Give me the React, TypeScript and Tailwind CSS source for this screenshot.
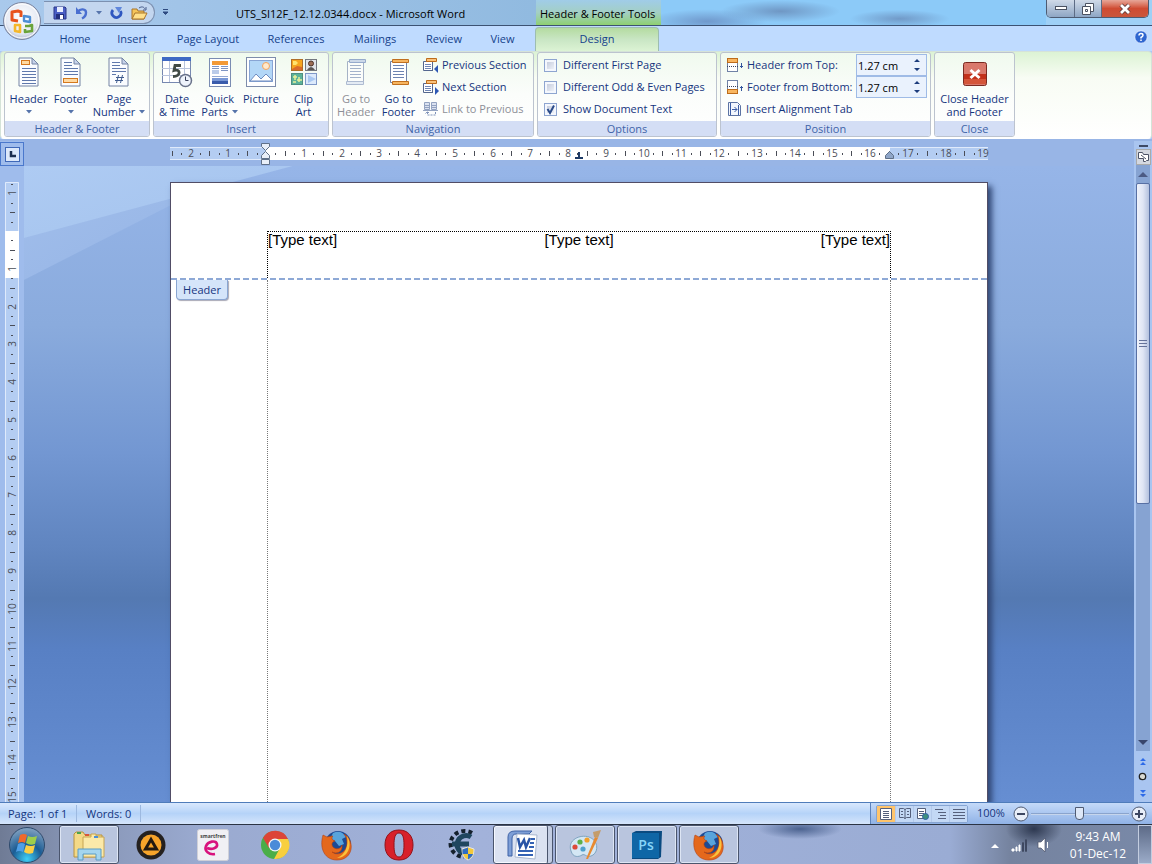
import type { ReactNode } from "react";

const CM = 37.75;

/* ---------- small icons ---------- */

const SaveIcon = () => (
  <svg width="14" height="14" viewBox="0 0 14 14">
    <path d="M1 1h11l1 1v11H1z" fill="#4a5fc4" stroke="#2b3789" />
    <rect x="4" y="1" width="6" height="5" fill="#e6ecff" />
    <rect x="3" y="8" width="8" height="5" fill="#23307c" />
    <rect x="7" y="9" width="3" height="4" fill="#fff" />
  </svg>
);

const UndoIcon = () => (
  <svg width="13" height="14" viewBox="0 0 13 14" fill="none">
    <path d="M3 5.500c2-3 8-3 8 1 0 3-2 5-4 6" stroke="#4a6fd0" strokeWidth="2.400" />
    <path d="M1 1v7h6z" fill="#4a6fd0" />
  </svg>
);

const RedoIcon = () => (
  <svg width="13" height="14" viewBox="0 0 13 14" fill="none">
    <path d="M3 4a4.500 4.500 0 1 0 7.500 1" stroke="#2f57c0" strokeWidth="2.800" />
    <path d="M5 1h7l-3 6z" fill="#5f86dc" />
  </svg>
);

const FolderIcon = () => (
  <svg width="17" height="14" viewBox="0 0 17 14">
    <path d="M1 13V3h5l1 2h6v8z" fill="#f5c55a" stroke="#a8742a" />
    <path d="M1 13l3-6h12l-3 6z" fill="#ffe08a" stroke="#a8742a" />
    <path d="M8 2c3-2 5-1 6 1M15 1v3h-3" fill="none" stroke="#4b5f8c" />
  </svg>
);

const OfficeOrb = () => (
  <svg width="42" height="42" viewBox="0 0 42 42">
    <defs>
      <radialGradient id="orb" cx="50%" cy="40%" r="62%">
        <stop offset="0" stopColor="#fff" />
        <stop offset="0.7" stopColor="#e6eaf4" />
        <stop offset="1" stopColor="#a9b3cc" />
      </radialGradient>
    </defs>
    <circle cx="21" cy="21" r="18.500" fill="url(#orb)" stroke="#7c86a0" />
    <circle cx="21" cy="21" r="17" fill="none" stroke="#fff" />
    <g fill="none" strokeLinejoin="round">
      <path d="M20 17v-5l-3-1-6 1v8l6 1" stroke="#e8521c" strokeWidth="3" />
      <path d="M23 21v-5l6 1v5z" stroke="#4d8ed6" strokeWidth="2.400" />
      <path d="M19 25h-5v6l5 1z" stroke="#f5b72b" strokeWidth="2.600" />
      <path d="M24 26h4l3-1v6l-7 1v-3" stroke="#6aa33a" strokeWidth="2.600" />
    </g>
  </svg>
);

const DocIcon = ({ kind }: { kind: "header" | "footer" | "number" }) => (
  <svg width="24" height="32" viewBox="0 0 24 32">
    <path d="M2 2h13l6 6v22H2z" fill="#fafcff" stroke="#7484a4" />
    <path d="M15 2v6h6z" fill="#c7d3ea" stroke="#7484a4" />
    <path
      d={
        kind === "number"
          ? "M5 6.500h8M5 9.500h8M5 12.500h14M5 15.500h14M5 18.500h4"
          : kind === "footer"
            ? "M5 6.500h8M5 9.500h8M5 12.500h14M5 15.500h14M5 18.500h14"
            : "M5 12.500h14M5 15.500h14M5 18.500h14M5 21.500h14M5 24.500h14M5 27.500h14"
      }
      stroke="#5f78ac"
    />
    {kind === "header" && <rect x="4.500" y="4.500" width="8" height="4" fill="#ffd9a0" stroke="#d4781d" />}
    {kind === "footer" && <rect x="4.500" y="22.500" width="14" height="4" fill="#ffd9a0" stroke="#d4781d" />}
    {kind === "number" && <path d="M11.500 19l-2 8M15.500 19l-2 8M9 21.500h8M8 24.500h8" stroke="#405c8f" />}
  </svg>
);

const DateIcon = () => (
  <svg width="32" height="32" viewBox="0 0 32 32">
    <rect x="1.500" y="1.500" width="28" height="25" fill="#fff" stroke="#7788b0" />
    <rect x="1" y="1" width="29" height="4" fill="#3e69c4" />
    <path d="M1 12.500h28M1 19.500h28M8.500 5v21M23.500 5v21" stroke="#b8c4dc" />
    <path d="M20 9.500h-6l-1 5c7-2 7 6-1 6" fill="none" stroke="#414a45" strokeWidth="2.800" />
    <circle cx="24.500" cy="24.500" r="6" fill="#eef3fb" stroke="#69728a" strokeWidth="1.500" />
    <path d="M24.500 20.500v4h3" fill="none" stroke="#39415a" />
  </svg>
);

const QuickPartsIcon = () => (
  <svg width="24" height="32" viewBox="0 0 24 32">
    <rect x="1.500" y="2.500" width="21" height="28" fill="#fff" stroke="#7a8cb2" />
    <rect x="4" y="5" width="16" height="4" fill="#f39a35" />
    <path d="M4 10.500h7M4 12.500h7M13 10.500h7M13 12.500h7M13 14.500h7" stroke="#7f96c4" />
    <rect x="4" y="14" width="7" height="4" fill="#bacbe9" />
    <path d="M4 20.500h16" stroke="#96abd4" />
    <rect x="4" y="22" width="16" height="3" fill="#7998d6" />
    <rect x="4" y="25" width="16" height="3" fill="#3a5cab" />
  </svg>
);

const PictureIcon = () => (
  <svg width="32" height="32" viewBox="0 0 32 32">
    <rect x="1.500" y="1.500" width="29" height="29" fill="#fff" stroke="#7d8cab" />
    <rect x="4.500" y="4.500" width="23" height="21" fill="#b3d7f7" stroke="#88a5d4" />
    <circle cx="21" cy="10" r="3.500" fill="#ffe9cc" stroke="#f2a45e" />
    <path d="M5 25l6-7 5 5 5-5 6 6v1z" fill="#fff" stroke="#6f8dc0" />
  </svg>
);

const ClipArtIcon = () => (
  <svg width="28" height="32" viewBox="0 0 28 32">
    <rect x="1.500" y="3.500" width="11" height="11" fill="#f6a51f" stroke="#b06f28" />
    <path d="M2 13l5-3 5 1v3H2z" fill="#d96a2c" />
    <path d="M3 5h3l2 2-2 2H3z" fill="#ffe36e" />
    <rect x="15.500" y="3.500" width="11" height="11" fill="#e1e4ea" stroke="#74787f" />
    <circle cx="21" cy="7.500" r="2.500" fill="#9c6d55" stroke="#4d3328" />
    <path d="M17 14q4-6 8 0z" fill="#5b5654" />
    <rect x="1.500" y="17.500" width="11" height="11" fill="#5cb29a" stroke="#4f8f80" />
    <path d="M5 19v5M3 21h4M9 21v5M7 24h5M3 26h3" stroke="#e8f19a" fill="none" strokeWidth="1.500" />
    <rect x="15.500" y="17.500" width="11" height="11" fill="#dceafc" stroke="#7f98c8" />
    <path d="M18 19l8 4-8 4z" fill="#a9c8f2" />
  </svg>
);

const GoToIcon = ({ footer }: { footer?: boolean }) => (
  <svg width="26" height="30" viewBox="0 0 26 30" opacity={footer ? 1 : 0.6}>
    <path d="M4.500 4.500h16v21h-16z" fill="#fff" stroke="#7183a9" />
    <path d="M7 8.500h11M7 11.500h11M7 14.500h11M7 17.500h11M7 20.500h11" stroke="#6d83b0" />
    <path d="M6.500 2.500h16v3h-16z" fill={footer ? "#f6b560" : "#b4c4e4"} stroke={footer ? "#c06f1e" : "#5a77b4"} />
    <path
      d={footer ? "M6.500 24.500h16v3h-16z" : "M3.500 24.500h17v3h-17z"}
      fill={footer ? "#f6b560" : "#d7e0f2"}
      stroke={footer ? "#c06f1e" : "#7d90b8"}
    />
  </svg>
);

const SectionIcon = ({ next }: { next?: boolean }) => (
  <svg width="16" height="16" viewBox="0 0 16 16">
    <path d="M0.500 4.500h9v9h-9z" fill="#fff" stroke="#54678f" />
    <path d="M2 7.500h6M2 9.500h6M2 11.500h6" stroke="#6f86b5" />
    <path d="M3.500 1.500h10v3h-10z" fill="#f9c27b" stroke="#bd6c1b" />
    <path d="M9.500 5v9" stroke="#54678f" />
    <path d={next ? "M12 8l4 4-4 4z" : "M15 8l-4 4 4 4z"} fill="#2d57b4" />
  </svg>
);

const LinkPrevIcon = () => (
  <svg width="16" height="16" viewBox="0 0 16 16" opacity="0.800">
    <path d="M1.500 1.500h5v7h-5zM8.500 1.500h5v7h-5z" fill="#d3dcee" stroke="#7a8db3" />
    <path d="M2 4.500h4M9 4.500h4M2 6.500h4M9 6.500h4M0 9.500h15" stroke="#7a8db3" />
    <path d="M4.500 11v3h8v-3M2.500 12.500l2-2 2 2" fill="none" stroke="#6078a8" strokeDasharray="2 1" />
  </svg>
);

const FromEdgeIcon = ({ bottom }: { bottom?: boolean }) => (
  <svg width="17" height="16" viewBox="0 0 17 16">
    <rect x="0.500" y="1.500" width="10" height="13" fill="#fff" stroke="#7082a6" />
    <rect x="0.500" y={bottom ? 10.5 : 1.5} width="10" height="4" fill="#f9b660" stroke="#bd6c1b" />
    <path d={bottom ? "M0 7.500h11" : "M0 9.500h11"} stroke="#39435c" strokeDasharray="1 1" />
    <path
      d={bottom ? "M14.500 12V7M13 9l1.500-1.500L16 9" : "M14.500 6v5M13 9l1.500 1.500L16 9"}
      stroke="#31549c"
      fill="none"
    />
  </svg>
);

const AlignTabIcon = () => (
  <svg width="16" height="16" viewBox="0 0 16 16">
    <path d="M1.500 1.500h9l3 3v10h-12z" fill="#f2f6fd" stroke="#5c73a3" />
    <path d="M3.500 2v12M11.500 4v10M5 8.500h5M7.500 6L10 8.500 7.500 11" stroke="#3c5ca4" fill="none" />
  </svg>
);

/* ---------- ribbon parts ---------- */

const Caret = () => (
  <svg width="6" height="4" viewBox="0 0 6 4" className="inline-block">
    <path d="M0 0h6L3 3.500z" fill="#5674ab" />
  </svg>
);

type GroupProps = { title: string; width: string; children: ReactNode };

const Group = ({ title, width, children }: GroupProps) => (
  <section
    className={`flex h-[85px] shrink-0 flex-col overflow-hidden rounded-[3px] border border-[#bcc3cf] bg-linear-to-b from-[#f0faee] via-[#fbfdfb] to-white ${width}`}
  >
    <div className="flex flex-1">{children}</div>
    <h2 className="h-[15px] bg-[#d4def5] text-center leading-[15px] text-[#3f64a8]">{title}</h2>
  </section>
);

type BigButtonProps = {
  icon: ReactNode;
  lines: string[];
  width: string;
  caret?: boolean;
  disabled?: boolean;
};

const BigButton = ({ icon, lines, width, caret, disabled }: BigButtonProps) => (
  <button
    disabled={disabled}
    className={`flex flex-col items-center pt-[3px] leading-[13px] ${disabled ? "text-[#8d8f97]" : "text-[#15357e]"} ${width}`}
  >
    <span className="mb-1 flex h-[32px] items-center">{icon}</span>
    {lines.map((line, i) => (
      <span key={line} className="flex items-center gap-1 whitespace-nowrap">
        {line}
        {caret && lines.length > 1 && i === lines.length - 1 && <Caret />}
      </span>
    ))}
    {caret && lines.length === 1 && (
      <span className="flex h-[13px] items-center">
        <Caret />
      </span>
    )}
  </button>
);

const RowButton = ({ icon, label, disabled }: { icon: ReactNode; label: string; disabled?: boolean }) => (
  <button
    disabled={disabled}
    className={`flex h-[22px] items-center gap-[3px] whitespace-nowrap ${disabled ? "text-[#8d8f97]" : "text-[#15357e]"}`}
  >
    {icon}
    {label}
  </button>
);

const Check = ({ label, checked }: { label: string; checked?: boolean }) => (
  <label className="flex h-[22px] items-center gap-[6px] whitespace-nowrap text-[#15357e]">
    <span className="grid shrink-0 place-items-center">
      <input
        type="checkbox"
        defaultChecked={checked}
        className="peer col-start-1 row-start-1 size-[13px] appearance-none border border-[#8ea5d0] bg-linear-to-br from-[#bcc4d6] to-[#f8faff] shadow-[inset_0_0_0_2px_#f4f7fd]"
      />
      <svg width="13" height="13" viewBox="0 0 13 13" className="pointer-events-none invisible col-start-1 row-start-1 peer-checked:visible">
        <path d="M3.500 6l2.500 4 4-7.500" fill="none" stroke="#2b4c8a" strokeWidth="2" />
      </svg>
    </span>
    {label}
  </label>
);

const Spin = ({ id, icon, label }: { id: string; icon: ReactNode; label: string }) => (
  <div className="flex h-[22px] items-center whitespace-nowrap text-[#15357e]">
    <span className="w-[20px]">{icon}</span>
    <label htmlFor={id} className="w-[109px]">
      {label}
    </label>
    <span className="flex h-[22px] w-[71px] items-center border border-[#9fbbe6] bg-[#eaf2fd]">
      <input id={id} defaultValue="1.27 cm" className="h-full w-[56px] bg-transparent px-px text-black outline-none" />
      <svg width="8" height="14" viewBox="0 0 8 14">
        <path d="M1 4l3-3 3 3zM1 10l3 3 3-3z" fill="#1c3c7c" />
      </svg>
    </span>
  </div>
);

const Ribbon = () => (
  <div className="flex h-[88px] gap-[3px] rounded-[4px] border border-[#d5e3d8] border-b-white bg-linear-to-b from-[#dcf3d4] via-[#f8fcf4] via-30% to-white pl-[3px]">
    <Group title="Header & Footer" width="w-[146px]">
      <BigButton icon={<DocIcon kind="header" />} lines={["Header"]} caret width="w-[47px]" />
      <BigButton icon={<DocIcon kind="footer" />} lines={["Footer"]} caret width="w-[37px]" />
      <BigButton icon={<DocIcon kind="number" />} lines={["Page", "Number"]} caret width="w-[60px]" />
    </Group>
    <Group title="Insert" width="w-[176px]">
      <BigButton icon={<DateIcon />} lines={["Date", "& Time"]} width="w-[46px]" />
      <BigButton icon={<QuickPartsIcon />} lines={["Quick", "Parts"]} caret width="w-[39px]" />
      <BigButton icon={<PictureIcon />} lines={["Picture"]} width="w-[44px]" />
      <BigButton icon={<ClipArtIcon />} lines={["Clip", "Art"]} width="w-[41px]" />
    </Group>
    <Group title="Navigation" width="w-[202px]">
      <BigButton icon={<GoToIcon />} lines={["Go to", "Header"]} disabled width="w-[46px]" />
      <BigButton icon={<GoToIcon footer />} lines={["Go to", "Footer"]} width="w-[39px]" />
      <div className="flex flex-col pt-px pl-[5px]">
        <RowButton icon={<SectionIcon />} label="Previous Section" />
        <RowButton icon={<SectionIcon next />} label="Next Section" />
        <RowButton icon={<LinkPrevIcon />} label="Link to Previous" disabled />
      </div>
    </Group>
    <Group title="Options" width="w-[180px]">
      <div className="flex flex-col pt-px pl-[6px]">
        <Check label="Different First Page" />
        <Check label="Different Odd & Even Pages" />
        <Check label="Show Document Text" checked />
      </div>
    </Group>
    <Group title="Position" width="w-[211px]">
      <div className="flex flex-col pt-px pl-[6px]">
        <Spin id="from-top" icon={<FromEdgeIcon />} label="Header from Top:" />
        <Spin id="from-bottom" icon={<FromEdgeIcon bottom />} label="Footer from Bottom:" />
        <RowButton icon={<AlignTabIcon />} label="Insert Alignment Tab" />
      </div>
    </Group>
    <Group title="Close" width="w-[81px]">
      <BigButton
        icon={
          <svg width="24" height="28" viewBox="0 -4 24 28">
            <rect x="0.500" y="0.500" width="23" height="23" rx="2" fill="#d9796c" stroke="#7b2a22" />
            <path d="M1 12h22v5H1z" fill="#c2301a" />
            <path d="M1 17h22v5H1z" fill="#d4553a" />
            <path d="M7.500 8l9 8M16.500 8l-9 8" stroke="#fff" strokeWidth="3" />
          </svg>
        }
        lines={["Close Header", "and Footer"]}
        width="w-full"
      />
    </Group>
  </div>
);

/* ---------- title bar and tabs ---------- */

const tabs = [
  { name: "Home", width: "w-[58px]" },
  { name: "Insert", width: "w-[56px]" },
  { name: "Page Layout", width: "w-[96px]" },
  { name: "References", width: "w-[80px]" },
  { name: "Mailings", width: "w-[78px]" },
  { name: "Review", width: "w-[60px]" },
  { name: "View", width: "w-[57px]" },
];

const TitleBar = () => (
  <header className="flex h-[26px] border-b border-[#3c5273] bg-linear-to-r from-[#a9c9ec] via-[#8fb9df] to-[#9fd4f8] pl-[44px]">
    <nav className="flex h-[23px] w-[111px] items-center gap-[8px] self-center rounded-r-full border border-l-0 border-[#7c90b0] bg-[#c3d6ef] pl-[9px]">
      <button aria-label="Save"><SaveIcon /></button>
      <button aria-label="Undo"><UndoIcon /></button>
      <Caret />
      <button aria-label="Redo"><RedoIcon /></button>
      <button aria-label="Open"><FolderIcon /></button>
    </nav>
    <button aria-label="Customize" className="ml-[7px] w-[8px]">
      <svg width="7" height="7" viewBox="0 0 7 7">
        <path d="M1 0.500h5M1 3h5L3.500 5.500z" stroke="#2e4a80" fill="#2e4a80" />
      </svg>
    </button>
    <h1 className="ml-[66px] w-[300px] leading-[27px] whitespace-nowrap text-black">
      UTS_SI12F_12.12.0344.docx - Microsoft Word
    </h1>
    <p className="w-[125px] bg-linear-to-b from-[#a0cce8] via-[#a3cfc4] to-[#8fd070] pl-[4px] leading-[27px] whitespace-nowrap text-black">
      Header &amp; Footer Tools
    </p>
    <div className="min-w-0 flex-1 bg-[radial-gradient(60px_11px_at_31%_45%,#6f97c4,transparent),radial-gradient(50px_9px_at_62%_75%,#719ac8,transparent),radial-gradient(60px_12px_at_12%_85%,#7099cc,transparent)] bg-[#8ccaf8]" />
    <div className="flex shrink-0 bg-[#9fd0f6] pr-[3px]">
      <div className="flex h-[18px] w-[103px] overflow-hidden rounded-b-[5px] border border-t-0 border-[#4d5b72]">
        <button aria-label="Minimize" className="flex w-[28px] items-center justify-center border-r border-[#5d6c85] bg-linear-to-b from-[#d0dae8] to-[#8ea6c4]">
          <svg width="12" height="5"><rect x="0.500" y="0.500" width="11" height="3" fill="#fff" stroke="#4b5261" /></svg>
        </button>
        <button aria-label="Restore" className="flex w-[27px] items-center justify-center border-r border-[#5d6c85] bg-linear-to-b from-[#d0dae8] to-[#8ea6c4]">
          <svg width="12" height="12" viewBox="0 0 12 12" fill="#fff" stroke="#4b5261">
            <path d="M3.500 0.500h8v8h-8z" />
            <path d="M0.500 3.500h8v8h-8zM3.500 6.500h2v2h-2z" />
          </svg>
        </button>
        <button aria-label="Close" className="flex flex-1 items-center justify-center bg-linear-to-b from-[#e6a698] via-[#cf4b32] to-[#c9563c]">
          <svg width="14" height="12" viewBox="0 0 14 12">
            <path d="M3 2l8 8M11 2l-8 8" stroke="#5b3a3a" strokeWidth="4.500" />
            <path d="M3 2l8 8M11 2l-8 8" stroke="#fff" strokeWidth="2.800" />
          </svg>
        </button>
      </div>
    </div>
  </header>
);

const TabRow = () => (
  <nav className="flex h-[25px] items-end bg-[#bfdbff] pl-[46px] text-[#15428b]">
    {tabs.map((tab) => (
      <button key={tab.name} className={`h-[24px] whitespace-nowrap ${tab.width}`}>
        {tab.name}
      </button>
    ))}
    <button className="ml-[4px] h-[24px] w-[124px] rounded-t-[4px] border border-b-0 border-[#9dbdb0] bg-linear-to-b from-[#b4dba0] via-[#c9e6c4] to-[#dcf3d4]">
      Design
    </button>
    <button aria-label="Help" className="mr-[4px] mb-[7px] ml-auto">
      <svg width="14" height="14" viewBox="0 0 14 14">
        <circle cx="7" cy="7" r="6.300" fill="#2f66d0" stroke="#dfeaff" />
        <path d="M5 5.500q0-2 2-2t2 1.700q0 1-2 2.300v1M7 9.500v1.500" fill="none" stroke="#fff" strokeWidth="1.500" />
      </svg>
    </button>
  </nav>
);

/* ---------- rulers ---------- */

type RulerProps = { length: number; zero: number; whiteEnd: number };

const quarterMarks = (length: number, zero: number) => {
  const marks: { q: number; at: number }[] = [];
  for (let q = Math.ceil((-zero / CM) * 4); (q * CM) / 4 + zero < length; q++) {
    if (q !== 0) marks.push({ q, at: Math.round(zero + (q * CM) / 4) });
  }
  return marks;
};

const HorizontalRuler = ({ length, zero, whiteEnd }: RulerProps) => (
  <svg width={length} height="22" viewBox={`0 -6 ${length} 22`} className="shrink-0 overflow-visible">
    <rect width={length} height="13" fill="#b4cdf2" />
    <path d={`M0 0.500h${length}M0 12.500h${length}`} stroke="#dfeafb" />
    <rect x={zero} width={whiteEnd - zero} height="13" fill="#fff" />
    {quarterMarks(length, zero).map(({ q, at }) =>
      q % 4 === 0 ? (
        <text key={q} x={at} y="10" textAnchor="middle" fontSize="10" fill="#4a4d57">
          {Math.abs(q / 4)}
        </text>
      ) : q % 2 === 0 ? (
        <rect key={q} x={at} y="4" width="1" height="5" fill="#4a4d57" />
      ) : (
        <rect key={q} x={at} y="6" width="1" height="2" fill="#4a4d57" />
      ),
    )}
    <g fill="#e9eff8" stroke="#5f7088">
      <path d={`M${zero - 4.5}-3.500h8v3l-4 4-4-4z`} />
      <path d={`M${zero - 4.5} 11.500v-3l4-4 4 4v3z`} />
      <path d={`M${zero - 4.5} 12.500h8v5h-8z`} />
      <path d={`M${whiteEnd - 4.5} 11.500v-3l4-4 4 4v3z`} fill="#8fa6c8" />
    </g>
    <path d="M405 11h8M409 5v6" stroke="#1d3a66" strokeWidth="2" />
  </svg>
);

const VerticalRuler = ({ length, zero, whiteEnd }: RulerProps) => (
  <svg width="14" height={length} viewBox={`0 0 14 ${length}`}>
    <rect width="14" height={length} fill="#b4cdf2" />
    <path d={`M0.500 ${length}V0.500h13V${length}`} fill="none" stroke="#dfeafb" />
    <rect y={zero} width="14" height={whiteEnd - zero} fill="#fff" />
    {quarterMarks(length, zero).map(({ q, at }) =>
      q % 4 === 0 ? (
        <text key={q} transform={`translate(11 ${at}) rotate(-90)`} textAnchor="middle" fontSize="10" fill="#4a4d57">
          {Math.abs(q / 4)}
        </text>
      ) : q % 2 === 0 ? (
        <rect key={q} x="5" y={at} width="5" height="1" fill="#4a4d57" />
      ) : (
        <rect key={q} x="6" y={at} width="2" height="1" fill="#4a4d57" />
      ),
    )}
  </svg>
);

/* ---------- document ---------- */

const ScrollColumn = () => (
  <aside className="flex w-[18px] shrink-0 flex-col items-center bg-[#a9c5f0]">
    <div className="mt-[4px] h-[2px] w-[9px] shrink-0 bg-[#3e4a66]" />
    <button aria-label="View ruler" className="mt-[2px] flex h-[16px] w-[15px] shrink-0 items-center justify-center border border-[#aaa] bg-[#d4d8e0]">
      <svg width="13" height="12" viewBox="0 0 13 12" fill="#fff" stroke="#4d5366">
        <path d="M1.500 1.500h4l1 2h5v6h-2l-1 1h-2v-3h-5zM4 4l5 4" />
      </svg>
    </button>
    <div className="flex w-[14px] flex-1 flex-col items-center bg-[#86a3d2]">
      <svg width="10" height="18" viewBox="0 0 10 18"><path d="M0 12l5-5 5 5z" fill="#4c5b84" /></svg>
      <div className="flex h-[321px] w-[14px] items-center justify-center rounded-[2px] border border-[#5870a4] bg-linear-to-r from-[#f0f3fb] via-[#dfe5f4] to-[#b4c1de]">
        <svg width="8" height="8"><path d="M0 0.500h8M0 3.500h8M0 6.500h8" stroke="#65739a" /></svg>
      </div>
      <svg width="10" height="18" viewBox="0 0 10 18" className="mt-auto"><path d="M0 7l5 5 5-5z" fill="#38466c" /></svg>
    </div>
    <svg width="14" height="51" viewBox="0 0 14 51">
      <path d="M4 10l3-3 3 3zM4 14l3-3 3 3zM4 39l3 3 3-3zM4 43l3 3 3-3z" fill="#2d6ae8" />
      <circle cx="6.500" cy="25.500" r="3.200" fill="#d9d9d2" stroke="#222" strokeWidth="1.300" />
    </svg>
  </aside>
);

const Page = () => (
  <article className="mx-auto mt-[16px] flex w-[818px] shrink-0 flex-col border border-b-0 border-[#514d66] bg-white shadow-[4px_4px_6px_#2f4674]">
    <div className="mx-[96px] mt-[48px] flex h-[47px] justify-between border border-b-0 border-dotted border-black font-['Liberation_Sans',Arial,sans-serif] text-[15px] leading-[16px] text-black">
      <span>[Type text]</span>
      <span>[Type text]</span>
      <span>[Type text]</span>
    </div>
    <div className="h-[2px] bg-[repeating-linear-gradient(90deg,#8ea9d6_0_6px,transparent_6px_9px)]" />
    <div className="relative mx-[96px] flex-1 border-x border-dotted border-[#777]">
      <div className="absolute top-0 -left-[92px] h-[20px] w-[52px] rounded-b-[4px] border border-t-0 border-[#8aa6d2] bg-[#d5e5fa] text-center leading-[20px] text-[#15357e] shadow-[1px_1px_1px_#a9a9b6]">
        Header
      </div>
    </div>
  </article>
);

const Workspace = () => (
  <main className="flex min-h-0 flex-1 bg-[#98b5e6] pt-[2px]">
    <div className="flex w-[24px] shrink-0 flex-col overflow-hidden bg-[#9fbcec]">
      <button aria-label="Tab stop" className="mt-px flex h-[24px] w-[24px] shrink-0 items-center justify-center border border-[#4a78cc]">
        <span className="flex size-[15px] items-center justify-center border border-[#3f68b8] bg-[#dce8fa]">
          <svg width="7" height="7"><path d="M2 0v5h5" fill="none" stroke="#1c2f50" strokeWidth="2.500" /></svg>
        </span>
      </button>
      <div className="mt-[16px] ml-[5px]">
        <VerticalRuler length={620} zero={49} whiteEnd={96} />
      </div>
    </div>
    <div className="flex min-w-0 flex-1 flex-col overflow-hidden">
      <div className="flex h-[25px] shrink-0 justify-center">
        <HorizontalRuler length={818} zero={96} whiteEnd={720} />
      </div>
      <div className="flex min-h-0 flex-1 bg-[linear-gradient(165deg,#aecbf3_0,#a9c7f0_69px,transparent_70px),linear-gradient(153deg,#a2bfec_0,#9bb9e8_101px,transparent_102px),linear-gradient(180deg,#96b5e8_0%,#8aabdd_25%,#7397d2_45%,#6085c0_60%,#5479b2_68%,#5880c4_76%,#668ed2_100%)] bg-no-repeat">
        <Page />
      </div>
    </div>
    <ScrollColumn />
  </main>
);

/* ---------- status bar ---------- */

const views = [
  { name: "Print Layout", d: "M1.500 1.500h11v11h-11zM4 4.500h6M4 6.500h6M4 8.500h6M4 10.500h6" },
  { name: "Full Screen Reading", d: "M7 2v10M1.500 1.500h4l1.500 1 1.500-1h4v9h-4l-1.500 1-1.500-1h-4zM3 4.500h2M3 7.500h2M9 4.500h2M9 7.500h2" },
  { name: "Web Layout", d: "M1.500 1.500h8v10h-8zM3 4.500h5M3 6.500h5M3 8.500h4" },
  { name: "Outline", d: "M1 2.500h8M4 5.500h8M6 8.500h6M4 11.500h8" },
  { name: "Draft", d: "M1 2.500h12M1 5.500h12M1 8.500h12M1 11.500h12" },
];

const StatusBar = () => (
  <footer className="flex h-[22px] shrink-0 items-center border-t border-[#4f7cba] bg-linear-to-b from-[#d9e8fd] via-[#b5d3f8] to-[#d5e5fb] text-[#15357e]">
    <span className="w-[77px] border-r border-[#9db9e0] pl-[8px] leading-[17px] whitespace-nowrap">Page: 1 of 1</span>
    <span className="w-[64px] border-r border-[#9db9e0] pl-[9px] leading-[17px] whitespace-nowrap">Words: 0</span>
    <div className="ml-auto flex h-full items-center border-l border-[#5d83bd] bg-linear-to-b from-[#c4daf9] to-[#90b2e6] pl-[5px]">
      <div className="flex h-[18px] rounded-[2px] border border-[#86a4d2]">
        {views.map((view, i) => (
          <button
            key={view.name}
            aria-label={view.name}
            className={`flex w-[18px] items-center justify-center ${i === 0 ? "bg-[#ffc46b]" : "border-l border-[#b4c9ea] bg-[#c3d8f5]"}`}
          >
            <svg width="14" height="14" viewBox="0 0 14 14" fill={i === 0 || i === 2 ? "#fff" : "none"} stroke="#55607c">
              <path d={view.d} />
              {i === 2 && <circle cx="9.500" cy="9.500" r="3" fill="#3f8f7d" stroke="#2f5fa8" />}
            </svg>
          </button>
        ))}
      </div>
      <span className="w-[45px] pl-[9px]">100%</span>
      <button aria-label="Zoom out">
        <svg width="16" height="16" viewBox="0 0 16 16"><circle cx="8" cy="8" r="7" fill="#e8eef8" stroke="#4f5b73" /><path d="M4 8h8" stroke="#3d4761" strokeWidth="2" /></svg>
      </button>
      <input
        type="range"
        aria-label="Zoom"
        defaultValue={49}
        className="mx-[2px] h-[14px] w-[98px] appearance-none bg-[linear-gradient(#6c8bbd,#e4eefc)] bg-[size:100%_2px] bg-center bg-no-repeat [&::-webkit-slider-thumb]:h-[13px] [&::-webkit-slider-thumb]:w-[9px] [&::-webkit-slider-thumb]:appearance-none [&::-webkit-slider-thumb]:rounded-b-[4px] [&::-webkit-slider-thumb]:border [&::-webkit-slider-thumb]:border-[#4f5b73] [&::-webkit-slider-thumb]:bg-[#dde7f7]"
      />
      <button aria-label="Zoom in" className="mr-[5px]">
        <svg width="16" height="16" viewBox="0 0 16 16"><circle cx="8" cy="8" r="7" fill="#e8eef8" stroke="#4f5b73" /><path d="M4 8h8M8 4v8" stroke="#3d4761" strokeWidth="2" /></svg>
      </button>
    </div>
  </footer>
);

/* ---------- taskbar ---------- */

const Firefox = () => (
  <svg width="32" height="32" viewBox="0 0 32 32">
    <circle cx="17" cy="15" r="13" fill="#1d4a94" />
    <path d="M12 4q8-4 13 4l-4 2 2 5-5 2-4-5-5-2z" fill="#58a4dc" />
    <path d="M2 6l4 2 6-1c-2 2-1 4 2 5-3 1-4 3-2 6 3 3 8 2 9-2 1 8-6 9-10 7 7 5 15-1 15-9 0-4-1-7-3-9 11 6 10 26-7 26C4 31-2 20 2 6z" fill="#e4681c" stroke="#b3400f" strokeWidth="0.600" />
    <path d="M26 7c6 9 1 22-10 22 8-3 12-12 10-22z" fill="#fbc33c" />
  </svg>
);

const taskIcons: { name: string; open?: boolean; active?: boolean; icon: ReactNode }[] = [
  {
    name: "Explorer",
    open: true,
    icon: (
      <svg width="34" height="32" viewBox="0 0 34 32">
        <path d="M2 28V5l2-2h7l2 3h17v22z" fill="#f3d987" stroke="#b8923f" />
        <path d="M11 8h8v-3h5v3h8v20H11z" fill="#fbe9a9" stroke="#c7a452" />
        <path d="M5 4h4" stroke="#4aa34b" strokeWidth="2" />
        <path d="M13 6h4" stroke="#d8563a" strokeWidth="2" />
        <path d="M22 8h4" stroke="#4a8fd8" strokeWidth="2" />
        <path d="M6 31V20h23v11h-5v-6H11v6z" fill="#a4d5ee" stroke="#5b9cc4" />
      </svg>
    ),
  },
  {
    name: "Aimp",
    icon: (
      <svg width="30" height="30" viewBox="0 0 30 30">
        <circle cx="15" cy="15" r="14.500" fill="#25211f" />
        <circle cx="15" cy="15" r="10.500" fill="#f7a42a" />
        <path d="M15 9.500l5.500 9.500h-11z" fill="none" stroke="#241a10" strokeWidth="3" />
      </svg>
    ),
  },
  {
    name: "Smartfren",
    icon: (
      <svg width="32" height="32" viewBox="0 0 32 32">
        <rect x="0.500" y="0.500" width="31" height="31" rx="2" fill="#f0f0f4" stroke="#cfd0d8" />
        <text x="16" y="9" textAnchor="middle" fontSize="5" fontWeight="700" fill="#444">smartfren</text>
        <path d="M10 19c5 2 11 0 10-4s-9-3-11 2 3 9 9 8" fill="none" stroke="#d8127d" strokeWidth="2.600" />
      </svg>
    ),
  },
  {
    name: "Chrome",
    icon: (
      <svg width="30" height="30" viewBox="0 0 30 30">
        <circle cx="15" cy="15" r="14" fill="#4aae48" />
        <path d="M3 8a14 14 0 0 1 25 1H15l-6 9z" fill="#dc4437" />
        <path d="M28 9a14 14 0 0 1-14 20l6-11-2-9z" fill="#f8cf3e" />
        <circle cx="15" cy="15" r="6.500" fill="#f4f6f8" />
        <circle cx="15" cy="15" r="5.200" fill="#4b8bd8" />
      </svg>
    ),
  },
  { name: "Firefox", icon: <Firefox /> },
  {
    name: "Opera",
    icon: (
      <svg width="30" height="32" viewBox="0 0 30 32">
        <path fillRule="evenodd" d="M15 1C6 1 1 7 1 16s5 15 14 15 14-6 14-15S24 1 15 1zm0 3c4 0 5 5 5 12s-1 12-5 12-5-5-5-12 1-12 5-12z" fill="#d8202a" stroke="#921219" />
      </svg>
    ),
  },
  {
    name: "Settings",
    icon: (
      <svg width="34" height="32" viewBox="0 0 34 32">
        <path d="M28 4a14 13 0 1 0-8 24" fill="none" stroke="#14202c" strokeWidth="4" strokeDasharray="4 3" />
        <path d="M27 8a9 9 0 1 0-8 16M8 15h17" fill="none" stroke="#1f465f" strokeWidth="5" />
        <path d="M18 20l6-2 6 2c0 6-2 9-6 11-4-2-6-5-6-11z" fill="#f3c93a" stroke="#e6e6e6" />
        <path d="M24 18.500l-5.500 2v4.500H24zM24 25h5c-1 3-3 4-5 5.500z" fill="#2f6ec4" />
      </svg>
    ),
  },
  {
    name: "Word",
    open: true,
    active: true,
    icon: (
      <svg width="32" height="32" viewBox="0 0 32 32">
        <path d="M1 27V8q0-6 7-6h17l-3 3H9q-4 0-4 5v17z" fill="#7d9ed6" stroke="#3f63a6" />
        <path d="M10 5l20 1-2 24-20-2z" fill="#fff" stroke="#a9b7d0" />
        <path d="M11 9l2 9 4-7 2 7 4-9" fill="none" stroke="#2a55a6" strokeWidth="2.500" />
        <path d="M24 10h4M23 14h4M22 18h5M11 22h15M11 26h15" stroke="#3462b4" strokeWidth="2" />
      </svg>
    ),
  },
  {
    name: "Paint",
    open: true,
    icon: (
      <svg width="34" height="32" viewBox="0 0 34 32">
        <path d="M3 22C-1 11 12 5 21 8s10 14 4 18-8-2-11 0-9 3-11-4z" fill="#d4e7f4" stroke="#7fa4c0" />
        <circle cx="7" cy="18" r="2.600" fill="#dc4a3a" />
        <circle cx="12" cy="13" r="2.600" fill="#5bb04a" />
        <circle cx="19" cy="11" r="2.600" fill="#f1a02c" />
        <circle cx="15" cy="20" r="2.600" fill="#4fa0cc" />
        <path d="M27 8l3 1-10 21h-2z" fill="#e88a30" />
        <path d="M25 3l8-2-3 8-4-1z" fill="#c49c6b" />
      </svg>
    ),
  },
  {
    name: "Photoshop",
    open: true,
    icon: (
      <svg width="32" height="30" viewBox="0 0 32 30">
        <path d="M1 3l4-2h26l-1 26-3 2H1z" fill="#0a4a80" />
        <rect x="1" y="3" width="27" height="25" fill="#0f66a6" />
        <text x="15" y="20" textAnchor="middle" fontSize="14" fontWeight="600" fill="#86d4f8">Ps</text>
      </svg>
    ),
  },
  { name: "Firefox window", open: true, icon: <Firefox /> },
];

const Taskbar = () => (
  <nav className="flex h-[40px] shrink-0 items-stretch border-t border-[#2b3444] bg-[radial-gradient(42px_10px_at_800px_4px,#4c6390,transparent),radial-gradient(28px_18px_at_1034px_4px,#2d3850,transparent),linear-gradient(90deg,#6f7b95_0,#8391b0_60px,#9aaad0_200px,#a2b2da_480px,#9aacd4_950px,#75839f_1010px,#7989a8_100%)]">
    <button aria-label="Start" className="flex w-[54px] shrink-0 items-center justify-center">
      <svg width="38" height="38" viewBox="0 0 38 38">
        <defs>
          <radialGradient id="start" cx="50%" cy="90%" r="85%">
            <stop offset="0" stopColor="#3fd0f6" />
            <stop offset="0.500" stopColor="#1b5c94" />
            <stop offset="1" stopColor="#7c9dbe" />
          </radialGradient>
        </defs>
        <circle cx="19" cy="19" r="17.500" fill="url(#start)" stroke="#2f4a6c" />
        <path d="M12 9q4-2 7 0l-2 8q-3-2-7 0z" fill="#f0692a" />
        <path d="M20 10q4 2 9 0l-2 8q-5 2-9-1z" fill="#9fce4b" />
        <path d="M10 18q4-2 7 0l-2 8q-4-2-7 0z" fill="#4f9fe6" />
        <path d="M18 19q5 2 9 0l-2 8q-5 2-9-1z" fill="#fbcf45" />
      </svg>
    </button>
    <ul className="ml-[5px] flex gap-[2px]">
      {taskIcons.map((task) => (
        <li key={task.name} className="flex">
          <button
            aria-label={task.name}
            className={`flex w-[60px] items-center justify-center rounded-[3px] border ${
              task.active
                ? "border-[#4a556d] bg-[#dbe2f1] shadow-[inset_-5px_0_0_-1px_#c3cde2,inset_-6px_0_0_-1px_#4a556d,inset_0_0_0_1px_#f5f8ff]"
                : task.open
                  ? "border-[#4a556d] bg-[#b9c5de] shadow-[inset_0_0_0_1px_#dde5f4]"
                  : "border-transparent"
            }`}
          >
            {task.icon}
          </button>
        </li>
      ))}
    </ul>
    <div className="ml-auto flex items-center text-white">
      <svg width="60" height="18" viewBox="0 0 60 18">
        <path d="M2 12l4-4 4 4z" fill="#fff" />
        <path d="M23 15v-2h2v2zM27 15v-4h1v4zM30 15V9h1v6z" fill="#fff" stroke="#fff" />
        <path d="M33.500 15.500v-9h1v9zM36.500 15.500v-12h1v12z" fill="#a7b3c9" stroke="#3e4860" />
        <path d="M49 6h3l4-4v14l-4-4h-3z" fill="#fff" stroke="#4a5268" strokeWidth="0.700" />
        <path d="M58.500 6v6" stroke="#fff" />
      </svg>
      <div className="ml-[17px] w-[64px] text-center text-[12px] leading-[17px] whitespace-nowrap">
        <p>9:43 AM</p>
        <p>01-Dec-12</p>
      </div>
      <button aria-label="Show desktop" className="ml-[8px] h-full w-[14px] border border-[#c3cde0] bg-linear-to-b from-[#5d6b88] to-[#9babc8]" />
    </div>
  </nav>
);

export default function App() {
  return (
    <div className="relative flex h-screen min-h-[600px] flex-col overflow-hidden bg-[#a9c8f5] font-['Open_Sans','Noto_Sans',sans-serif] text-[11px]">
      <TitleBar />
      <TabRow />
      <Ribbon />
      <Workspace />
      <StatusBar />
      <Taskbar />
      <button aria-label="Office Button" className="absolute top-0 left-px">
        <OfficeOrb />
      </button>
    </div>
  );
}
